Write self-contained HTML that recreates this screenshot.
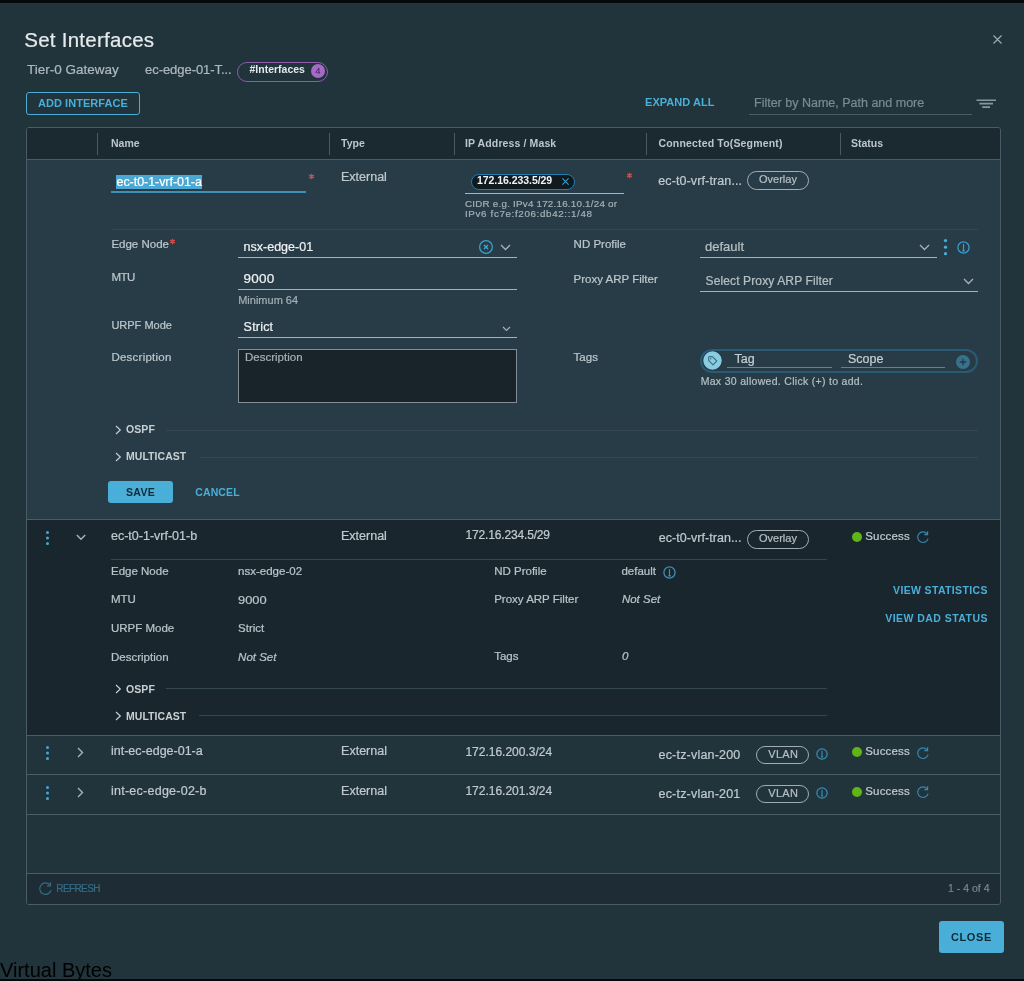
<!DOCTYPE html>
<html><head><meta charset="utf-8">
<style>
*{margin:0;padding:0;box-sizing:border-box}
html,body{width:1024px;height:981px;overflow:hidden;background:#05090c}
body{position:relative;font-family:"Liberation Sans",sans-serif}
.a{position:absolute;white-space:nowrap}
#modal{position:absolute;left:0;top:3px;width:1024px;height:976px;background:#21333b;border-top:1px solid #24363f;border-bottom:1px solid #24363f}
.dots{position:absolute;width:3px}
.dots i{display:block;width:3px;height:3px;border-radius:50%;background:#49afd9;margin-bottom:2.5px}
svg{overflow:visible}
</style></head><body>
<div id="modal"></div>
<div style="position:absolute;left:0;top:0;width:1024px;height:981px;will-change:transform">
<div class="a" style="left:24.3px;top:29.65px;font-size:20.5px;line-height:20.5px;color:#e6eaec;font-weight:normal;letter-spacing:0.25px;font-style:normal;-webkit-text-stroke:0.22px #e6eaec;">Set Interfaces</div>
<svg class="a" style="left:992.5px;top:35px" width="9" height="9" viewBox="0 0 9 9"><path d="M0.5 0.5L8.5 8.5M8.5 0.5L0.5 8.5" stroke="#a3aeb4" stroke-width="1.1"/></svg>
<div class="a" style="left:27px;top:62.57px;font-size:13.5px;line-height:13.5px;color:#aeb9bf;font-weight:normal;letter-spacing:0px;font-style:normal;-webkit-text-stroke:0.22px #aeb9bf;">Tier-0 Gateway</div>
<div class="a" style="left:145px;top:63.00px;font-size:13px;line-height:13px;color:#aeb9bf;font-weight:normal;letter-spacing:-0.05px;font-style:normal;-webkit-text-stroke:0.22px #aeb9bf;">ec-edge-01-T...</div>
<div class="a" style="left:237px;top:62px;width:91px;height:19.5px;border:1.8px solid #8d5cad;border-radius:10px"></div>
<div class="a" style="left:249.5px;top:64.11px;font-size:10.5px;line-height:10.5px;color:#e3e8eb;font-weight:bold;letter-spacing:0px;font-style:normal;">#Interfaces</div>
<div class="a" style="left:311px;top:64.3px;width:14px;height:14px;border-radius:50%;background:#a56ac6;color:#3b2350;font-size:9.5px;text-align:center;line-height:14px">4</div>
<div class="a" style="left:26px;top:92px;width:114px;height:23px;border:1px solid #49afd9;border-radius:3px"></div>
<div class="a" style="left:38px;top:97.69px;font-size:11px;line-height:11px;color:#49afd9;font-weight:bold;letter-spacing:0.05px;font-style:normal;">ADD INTERFACE</div>
<div class="a" style="left:645px;top:97.09px;font-size:11px;line-height:11px;color:#49afd9;font-weight:bold;letter-spacing:0.05px;font-style:normal;">EXPAND ALL</div>
<div class="a" style="left:754px;top:96.92px;font-size:12.5px;line-height:12.5px;color:#7b8a92;font-weight:normal;letter-spacing:0px;font-style:normal;-webkit-text-stroke:0.22px #7b8a92;">Filter by Name, Path and more</div>
<div class="a" style="left:749px;top:114px;width:223px;height:1px;background:#4b5c66"></div>
<svg class="a" style="left:976px;top:99px" width="21" height="10" viewBox="0 0 21 10"><path d="M0.5 1.2H20M3.4 4.6H17M6.2 8.1H14" stroke="#8a979e" stroke-width="1.6"/></svg>
<div class="a" style="left:26px;top:127px;width:975px;height:778px;border:1px solid #4b5c66;border-radius:3px;background:#21333b;overflow:hidden"></div>
<div class="a" style="left:27px;top:128px;width:973px;height:31px;background:#1b2931;border-radius:2px 2px 0 0"></div>
<div class="a" style="left:27px;top:159px;width:973px;height:1px;background:#4b5c66"></div>
<div class="a" style="left:27px;top:160px;width:973px;height:359px;background:#273c46"></div>
<div class="a" style="left:27px;top:519px;width:973px;height:1px;background:#4b5c66"></div>
<div class="a" style="left:27px;top:520px;width:973px;height:215px;background:#1a262d"></div>
<div class="a" style="left:27px;top:735px;width:973px;height:1px;background:#4b5c66"></div>
<div class="a" style="left:27px;top:774px;width:973px;height:1px;background:#4b5c66"></div>
<div class="a" style="left:27px;top:814px;width:973px;height:1px;background:#4b5c66"></div>
<div class="a" style="left:27px;top:873px;width:973px;height:1px;background:#4b5c66"></div>
<div class="a" style="left:27px;top:874px;width:973px;height:30px;background:#1e2d35;border-radius:0 0 2px 2px"></div>
<div class="a" style="left:97px;top:133px;width:1px;height:22px;background:#485a64"></div>
<div class="a" style="left:329px;top:133px;width:1px;height:22px;background:#485a64"></div>
<div class="a" style="left:454px;top:133px;width:1px;height:22px;background:#485a64"></div>
<div class="a" style="left:646px;top:133px;width:1px;height:22px;background:#485a64"></div>
<div class="a" style="left:840px;top:133px;width:1px;height:22px;background:#485a64"></div>
<div class="a" style="left:111px;top:138.41px;font-size:10.5px;line-height:10.5px;color:#bcc6cb;font-weight:bold;letter-spacing:0px;font-style:normal;">Name</div>
<div class="a" style="left:341px;top:138.41px;font-size:10.5px;line-height:10.5px;color:#bcc6cb;font-weight:bold;letter-spacing:0px;font-style:normal;">Type</div>
<div class="a" style="left:465px;top:138.41px;font-size:10.5px;line-height:10.5px;color:#bcc6cb;font-weight:bold;letter-spacing:0.12px;font-style:normal;">IP Address / Mask</div>
<div class="a" style="left:658.5px;top:138.41px;font-size:10.5px;line-height:10.5px;color:#bcc6cb;font-weight:bold;letter-spacing:0.17px;font-style:normal;">Connected To(Segment)</div>
<div class="a" style="left:851px;top:138.41px;font-size:10.5px;line-height:10.5px;color:#bcc6cb;font-weight:bold;letter-spacing:0px;font-style:normal;">Status</div>
<div class="a" style="left:116px;top:174.5px;width:86px;height:14px;background:#4aa8d5"></div>
<div class="a" style="left:116.5px;top:175.82px;font-size:12.5px;line-height:12.5px;color:#ffffff;font-weight:normal;letter-spacing:-0.05px;font-style:normal;-webkit-text-stroke:0.22px #ffffff;">ec-t0-1-vrf-01-a</div>
<div class="a" style="left:111px;top:191.3px;width:195px;height:1.7px;background:#3f8fb8"></div>
<svg class="a" style="left:308.2px;top:172.5px" width="7" height="7" viewBox="-3.5 -3.5 7 7"><path d="M0 -2.8V2.8M-2.42 -1.4L2.42 1.4M-2.42 1.4L2.42 -1.4" stroke="#cc4d4a" stroke-width="1.35"/></svg>
<div class="a" style="left:341px;top:170.52px;font-size:12.5px;line-height:12.5px;color:#c0cacf;font-weight:normal;letter-spacing:0px;font-style:normal;-webkit-text-stroke:0.22px #c0cacf;">External</div>
<div class="a" style="left:471px;top:173.8px;width:104px;height:16.2px;border:1.7px solid #1f7eae;border-radius:8.1px;background:#111a1f"></div>
<div class="a" style="left:477px;top:175.11px;font-size:10.5px;line-height:10.5px;color:#f2f4f5;font-weight:bold;letter-spacing:-0.05px;font-style:normal;">172.16.233.5/29</div>
<svg class="a" style="left:561.7px;top:178px" width="7" height="7" viewBox="0 0 7 7"><path d="M0.4 0.4L6.6 6.6M6.6 0.4L0.4 6.6" stroke="#3d9ccb" stroke-width="1.1"/></svg>
<div class="a" style="left:465px;top:193px;width:159px;height:1px;background:#a9b4ba"></div>
<svg class="a" style="left:625.8px;top:172.4px" width="7" height="7" viewBox="-3.5 -3.5 7 7"><path d="M0 -2.8V2.8M-2.42 -1.4L2.42 1.4M-2.42 1.4L2.42 -1.4" stroke="#cc4d4a" stroke-width="1.35"/></svg>
<div class="a" style="left:465px;top:198.90px;font-size:9.8px;line-height:9.8px;color:#a3afb5;font-weight:normal;letter-spacing:0.23px;font-style:normal;-webkit-text-stroke:0.22px #a3afb5;">CIDR e.g. IPv4 172.16.10.1/24 or</div>
<div class="a" style="left:465px;top:209.20px;font-size:9.8px;line-height:9.8px;color:#a3afb5;font-weight:normal;letter-spacing:0.64px;font-style:normal;-webkit-text-stroke:0.22px #a3afb5;">IPv6 fc7e:f206:db42::1/48</div>
<div class="a" style="left:658.2px;top:175.32px;font-size:12.5px;line-height:12.5px;color:#c0cacf;font-weight:normal;letter-spacing:0.12px;font-style:normal;-webkit-text-stroke:0.22px #c0cacf;">ec-t0-vrf-tran...</div>
<div class="a" style="left:747px;top:171px;width:62px;height:19px;border:1.5px solid #a2adb3;border-radius:10px"></div>
<div class="a" style="left:759px;top:173.69px;font-size:11px;line-height:11px;color:#b5bfc4;font-weight:normal;letter-spacing:0px;font-style:normal;-webkit-text-stroke:0.22px #b5bfc4;">Overlay</div>
<div class="a" style="left:111px;top:229px;width:867px;height:1px;background:#34474f"></div>
<div class="a" style="left:111.4px;top:238.77px;font-size:11.5px;line-height:11.5px;color:#bcc7cc;font-weight:normal;letter-spacing:0px;font-style:normal;-webkit-text-stroke:0.22px #bcc7cc;">Edge Node</div>
<svg class="a" style="left:169.4px;top:237.6px" width="7" height="7" viewBox="-3.5 -3.5 7 7"><path d="M0 -2.8V2.8M-2.42 -1.4L2.42 1.4M-2.42 1.4L2.42 -1.4" stroke="#cc4d4a" stroke-width="1.35"/></svg>
<div class="a" style="left:243.6px;top:241.22px;font-size:12.5px;line-height:12.5px;color:#eef1f3;font-weight:normal;letter-spacing:0px;font-style:normal;-webkit-text-stroke:0.22px #eef1f3;">nsx-edge-01</div>
<svg class="a" style="left:478.8px;top:240px" width="14" height="14" viewBox="0 0 14 14"><circle cx="7" cy="7" r="6.4" fill="none" stroke="#3fa2d0" stroke-width="1.2"/><path d="M5 5L9 9M9 5L5 9" stroke="#3fa2d0" stroke-width="1.5"/></svg>
<svg class="a" style="left:500px;top:244px" width="11" height="7" viewBox="0 0 11 7"><path d="M1 1L5.5 5.5L10 1" fill="none" stroke="#a5b3b9" stroke-width="1.3"/></svg>
<div class="a" style="left:238px;top:257px;width:279px;height:1px;background:#a5b3b9"></div>
<div class="a" style="left:111.4px;top:272.27px;font-size:11.5px;line-height:11.5px;color:#bcc7cc;font-weight:normal;letter-spacing:-0.5px;font-style:normal;-webkit-text-stroke:0.22px #bcc7cc;">MTU</div>
<div class="a" style="left:243.6px;top:271.57px;font-size:13.5px;line-height:13.5px;color:#eef1f3;font-weight:normal;letter-spacing:0.2px;font-style:normal;-webkit-text-stroke:0.22px #eef1f3;">9000</div>
<div class="a" style="left:238px;top:289px;width:279px;height:1px;background:#a5b3b9"></div>
<div class="a" style="left:238.2px;top:294.69px;font-size:11px;line-height:11px;color:#a3afb5;font-weight:normal;letter-spacing:0px;font-style:normal;-webkit-text-stroke:0.22px #a3afb5;">Minimum 64</div>
<div class="a" style="left:111.4px;top:319.89px;font-size:11px;line-height:11px;color:#bcc7cc;font-weight:normal;letter-spacing:0px;font-style:normal;-webkit-text-stroke:0.22px #bcc7cc;">URPF Mode</div>
<div class="a" style="left:243.6px;top:321.22px;font-size:12.5px;line-height:12.5px;color:#eef1f3;font-weight:normal;letter-spacing:0.2px;font-style:normal;-webkit-text-stroke:0.22px #eef1f3;">Strict</div>
<svg class="a" style="left:502px;top:326px" width="9" height="6" viewBox="0 0 9 6"><path d="M1 1L4.5 4.5L8 1" fill="none" stroke="#a5b3b9" stroke-width="1.2"/></svg>
<div class="a" style="left:238px;top:337px;width:279px;height:1px;background:#a5b3b9"></div>
<div class="a" style="left:111.4px;top:351.67px;font-size:11.5px;line-height:11.5px;color:#bcc7cc;font-weight:normal;letter-spacing:0.25px;font-style:normal;-webkit-text-stroke:0.22px #bcc7cc;">Description</div>
<div class="a" style="left:238px;top:349px;width:279px;height:54px;background:#18232a;border:1px solid #838e94"></div>
<div class="a" style="left:245px;top:351.67px;font-size:11.5px;line-height:11.5px;color:#a3afb5;font-weight:normal;letter-spacing:0px;font-style:normal;-webkit-text-stroke:0.22px #a3afb5;">Description</div>
<div class="a" style="left:573.6px;top:238.77px;font-size:11.5px;line-height:11.5px;color:#bcc7cc;font-weight:normal;letter-spacing:0px;font-style:normal;-webkit-text-stroke:0.22px #bcc7cc;">ND Profile</div>
<div class="a" style="left:705px;top:240.30px;font-size:13px;line-height:13px;color:#b5c0c5;font-weight:normal;letter-spacing:0px;font-style:normal;-webkit-text-stroke:0.22px #b5c0c5;">default</div>
<svg class="a" style="left:919px;top:244px" width="11" height="7" viewBox="0 0 11 7"><path d="M1 1L5.5 5.5L10 1" fill="none" stroke="#a5b3b9" stroke-width="1.3"/></svg>
<div class="a" style="left:700px;top:257px;width:237px;height:1px;background:#a5b3b9"></div>
<svg class="a" style="left:943px;top:238px" width="5" height="18" viewBox="0 0 5 18"><circle cx="2.5" cy="2.6" r="1.6" fill="#49afd9"/><circle cx="2.5" cy="9.2" r="1.6" fill="#49afd9"/><circle cx="2.5" cy="15.7" r="1.6" fill="#49afd9"/></svg>
<svg class="a" style="left:957px;top:241px" width="13" height="13" viewBox="0 0 13 13"><circle cx="6.5" cy="6.5" r="5.6" fill="none" stroke="#3d9ccb" stroke-width="1.3"/><path d="M6.5 3V9.8M5.2 9.8H7.8" stroke="#3d9ccb" stroke-width="1.2"/></svg>
<div class="a" style="left:573.6px;top:273.87px;font-size:11.5px;line-height:11.5px;color:#bcc7cc;font-weight:normal;letter-spacing:0px;font-style:normal;-webkit-text-stroke:0.22px #bcc7cc;">Proxy ARP Filter</div>
<div class="a" style="left:705.5px;top:275.24px;font-size:12px;line-height:12px;color:#b5c0c5;font-weight:normal;letter-spacing:0.13px;font-style:normal;-webkit-text-stroke:0.22px #b5c0c5;">Select Proxy ARP Filter</div>
<svg class="a" style="left:963px;top:278px" width="11" height="7" viewBox="0 0 11 7"><path d="M1 1L5.5 5.5L10 1" fill="none" stroke="#a5b3b9" stroke-width="1.3"/></svg>
<div class="a" style="left:700px;top:291px;width:278px;height:1px;background:#a5b3b9"></div>
<div class="a" style="left:573.6px;top:351.67px;font-size:11.5px;line-height:11.5px;color:#bcc7cc;font-weight:normal;letter-spacing:0px;font-style:normal;-webkit-text-stroke:0.22px #bcc7cc;">Tags</div>
<div class="a" style="left:700px;top:349.3px;width:278px;height:23.4px;border:2px solid #2a5b75;border-radius:12px"></div>
<svg class="a" style="left:703px;top:351px" width="19" height="19" viewBox="0 0 19 19"><circle cx="9.5" cy="9.5" r="9.2" fill="#89cde3"/><path d="M5.6 6.3V9.4L10 13.8L13.8 10L9.4 5.6H6.3Z" fill="none" stroke="#3e6f82" stroke-width="1.1" stroke-linejoin="round"/><circle cx="7.7" cy="7.7" r="0.8" fill="#3e6f82"/></svg>
<div class="a" style="left:734.6px;top:352.82px;font-size:12.5px;line-height:12.5px;color:#c5cfd4;font-weight:normal;letter-spacing:0px;font-style:normal;-webkit-text-stroke:0.22px #c5cfd4;">Tag</div>
<div class="a" style="left:727px;top:367px;width:105px;height:1px;background:#6f7e86"></div>
<div class="a" style="left:848px;top:352.82px;font-size:12.5px;line-height:12.5px;color:#c5cfd4;font-weight:normal;letter-spacing:0px;font-style:normal;-webkit-text-stroke:0.22px #c5cfd4;">Scope</div>
<div class="a" style="left:841px;top:367px;width:104px;height:1px;background:#6f7e86"></div>
<svg class="a" style="left:956px;top:354.5px" width="14" height="14" viewBox="0 0 14 14"><circle cx="7" cy="7" r="7" fill="#39718d"/><path d="M7 3.8V10.2M3.8 7H10.2" stroke="#1d3a47" stroke-width="1.3"/></svg>
<div class="a" style="left:700.7px;top:376.31px;font-size:10.5px;line-height:10.5px;color:#b3bfc4;font-weight:normal;letter-spacing:0.3px;font-style:normal;-webkit-text-stroke:0.22px #b3bfc4;">Max 30 allowed. Click (+) to add.</div>
<svg class="a" style="left:115px;top:425px" width="7" height="10" viewBox="0 0 7 10"><path d="M1 1L5.3 5L1 9" fill="none" stroke="#c5ced3" stroke-width="1.2"/></svg>
<div class="a" style="left:126px;top:424.31px;font-size:10.5px;line-height:10.5px;color:#c8d0d4;font-weight:bold;letter-spacing:0.1px;font-style:normal;">OSPF</div>
<div class="a" style="left:166px;top:430px;width:812px;height:1px;background:#34474f"></div>
<svg class="a" style="left:115px;top:452px" width="7" height="10" viewBox="0 0 7 10"><path d="M1 1L5.3 5L1 9" fill="none" stroke="#c5ced3" stroke-width="1.2"/></svg>
<div class="a" style="left:126px;top:451.11px;font-size:10.5px;line-height:10.5px;color:#c8d0d4;font-weight:bold;letter-spacing:0.05px;font-style:normal;">MULTICAST</div>
<div class="a" style="left:199px;top:457px;width:779px;height:1px;background:#34474f"></div>
<div class="a" style="left:108px;top:481px;width:65px;height:22px;background:#49afd9;border-radius:3px"></div>
<div class="a" style="left:126px;top:486.61px;font-size:10.5px;line-height:10.5px;color:#102a36;font-weight:bold;letter-spacing:0.3px;font-style:normal;">SAVE</div>
<div class="a" style="left:195.3px;top:486.61px;font-size:10.5px;line-height:10.5px;color:#49afd9;font-weight:bold;letter-spacing:0.1px;font-style:normal;">CANCEL</div>
<svg class="a" style="left:45px;top:530px" width="5" height="16" viewBox="0 0 5 16"><circle cx="2.5" cy="2.6" r="1.5" fill="#45a9d4"/><circle cx="2.5" cy="8" r="1.5" fill="#45a9d4"/><circle cx="2.5" cy="13.5" r="1.5" fill="#45a9d4"/></svg>
<svg class="a" style="left:76px;top:534px" width="10" height="7" viewBox="0 0 10 7"><path d="M0.8 1L5 5.2L9.2 1" fill="none" stroke="#a9b4ba" stroke-width="1.4"/></svg>
<div class="a" style="left:111px;top:530.12px;font-size:12.5px;line-height:12.5px;color:#c0cacf;font-weight:normal;letter-spacing:0px;font-style:normal;-webkit-text-stroke:0.22px #c0cacf;">ec-t0-1-vrf-01-b</div>
<div class="a" style="left:341px;top:529.92px;font-size:12.5px;line-height:12.5px;color:#c0cacf;font-weight:normal;letter-spacing:0px;font-style:normal;-webkit-text-stroke:0.22px #c0cacf;">External</div>
<div class="a" style="left:465.4px;top:529.14px;font-size:12px;line-height:12px;color:#c0cacf;font-weight:normal;letter-spacing:-0.15px;font-style:normal;-webkit-text-stroke:0.22px #c0cacf;">172.16.234.5/29</div>
<div class="a" style="left:658.7px;top:532.02px;font-size:12.5px;line-height:12.5px;color:#c0cacf;font-weight:normal;letter-spacing:0.05px;font-style:normal;-webkit-text-stroke:0.22px #c0cacf;">ec-t0-vrf-tran...</div>
<div class="a" style="left:747px;top:530px;width:62px;height:19px;border:1.5px solid #a2adb3;border-radius:10px"></div>
<div class="a" style="left:759px;top:532.69px;font-size:11px;line-height:11px;color:#b5bfc4;font-weight:normal;letter-spacing:0px;font-style:normal;-webkit-text-stroke:0.22px #b5bfc4;">Overlay</div>
<div class="a" style="left:851.7px;top:531.5px;width:10px;height:10px;background:#60b515;border-radius:50%"></div>
<div class="a" style="left:865.3px;top:530.57px;font-size:11.5px;line-height:11.5px;color:#c0cacf;font-weight:normal;letter-spacing:0.15px;font-style:normal;-webkit-text-stroke:0.22px #c0cacf;">Success</div>
<svg class="a" style="left:916.5px;top:531.0px" width="12" height="12" viewBox="0 0 12 12"><path d="M11.1 7.6A5.3 5.3 0 1 1 10.1 2.8" fill="none" stroke="#3787b0" stroke-width="1.15"/><path d="M10.6 0.2V3.6H7.3" fill="none" stroke="#3787b0" stroke-width="1.15"/></svg>
<div class="a" style="left:111px;top:559px;width:716px;height:1px;background:#34474f"></div>
<div class="a" style="left:111px;top:565.67px;font-size:11.5px;line-height:11.5px;color:#b9c4c9;font-weight:normal;letter-spacing:0px;font-style:normal;-webkit-text-stroke:0.22px #b9c4c9;">Edge Node</div>
<div class="a" style="left:238.1px;top:565.67px;font-size:11.5px;line-height:11.5px;color:#b9c4c9;font-weight:normal;letter-spacing:0px;font-style:normal;-webkit-text-stroke:0.22px #b9c4c9;">nsx-edge-02</div>
<div class="a" style="left:111px;top:594.37px;font-size:11.5px;line-height:11.5px;color:#b9c4c9;font-weight:normal;letter-spacing:0px;font-style:normal;-webkit-text-stroke:0.22px #b9c4c9;">MTU</div>
<div class="a" style="left:238.1px;top:595.37px;font-size:11.5px;line-height:11.5px;color:#b9c4c9;font-weight:normal;letter-spacing:0px;font-style:normal;-webkit-text-stroke:0.22px #b9c4c9;transform:scaleX(1.12);transform-origin:0 0">9000</div>
<div class="a" style="left:111px;top:623.17px;font-size:11.5px;line-height:11.5px;color:#b9c4c9;font-weight:normal;letter-spacing:0px;font-style:normal;-webkit-text-stroke:0.22px #b9c4c9;">URPF Mode</div>
<div class="a" style="left:238.1px;top:623.17px;font-size:11.5px;line-height:11.5px;color:#b9c4c9;font-weight:normal;letter-spacing:0px;font-style:normal;-webkit-text-stroke:0.22px #b9c4c9;">Strict</div>
<div class="a" style="left:111px;top:651.77px;font-size:11.5px;line-height:11.5px;color:#b9c4c9;font-weight:normal;letter-spacing:0px;font-style:normal;-webkit-text-stroke:0.22px #b9c4c9;">Description</div>
<div class="a" style="left:238.1px;top:651.77px;font-size:11.5px;line-height:11.5px;color:#b9c4c9;font-weight:normal;letter-spacing:0px;font-style:italic;-webkit-text-stroke:0.22px #b9c4c9;">Not Set</div>
<div class="a" style="left:494.2px;top:566.27px;font-size:11.5px;line-height:11.5px;color:#b9c4c9;font-weight:normal;letter-spacing:0px;font-style:normal;-webkit-text-stroke:0.22px #b9c4c9;">ND Profile</div>
<div class="a" style="left:621.4px;top:566.27px;font-size:11.5px;line-height:11.5px;color:#b9c4c9;font-weight:normal;letter-spacing:0px;font-style:normal;-webkit-text-stroke:0.22px #b9c4c9;">default</div>
<svg class="a" style="left:663px;top:566.2px" width="13" height="13" viewBox="0 0 13 13"><circle cx="6.5" cy="6.5" r="5.6" fill="none" stroke="#3b8fb9" stroke-width="1.3"/><path d="M6.5 3V9.8M5.2 9.8H7.8" stroke="#3b8fb9" stroke-width="1.2"/></svg>
<div class="a" style="left:494.2px;top:594.27px;font-size:11.5px;line-height:11.5px;color:#b9c4c9;font-weight:normal;letter-spacing:0px;font-style:normal;-webkit-text-stroke:0.22px #b9c4c9;">Proxy ARP Filter</div>
<div class="a" style="left:621.9px;top:594.27px;font-size:11.5px;line-height:11.5px;color:#b9c4c9;font-weight:normal;letter-spacing:0px;font-style:italic;-webkit-text-stroke:0.22px #b9c4c9;">Not Set</div>
<div class="a" style="left:494.2px;top:651.27px;font-size:11.5px;line-height:11.5px;color:#b9c4c9;font-weight:normal;letter-spacing:0px;font-style:normal;-webkit-text-stroke:0.22px #b9c4c9;">Tags</div>
<div class="a" style="left:622px;top:651.27px;font-size:11.5px;line-height:11.5px;color:#b9c4c9;font-weight:normal;letter-spacing:0px;font-style:italic;-webkit-text-stroke:0.22px #b9c4c9;">0</div>
<div class="a" style="left:893.1px;top:585.11px;font-size:10.5px;line-height:10.5px;color:#49afd9;font-weight:bold;letter-spacing:0.35px;font-style:normal;">VIEW STATISTICS</div>
<div class="a" style="left:885.3px;top:613.01px;font-size:10.5px;line-height:10.5px;color:#49afd9;font-weight:bold;letter-spacing:0.45px;font-style:normal;">VIEW DAD STATUS</div>
<svg class="a" style="left:115px;top:684px" width="7" height="10" viewBox="0 0 7 10"><path d="M1 1L5.3 5L1 9" fill="none" stroke="#c5ced3" stroke-width="1.2"/></svg>
<div class="a" style="left:126px;top:683.91px;font-size:10.5px;line-height:10.5px;color:#c8d0d4;font-weight:bold;letter-spacing:0.1px;font-style:normal;">OSPF</div>
<div class="a" style="left:166px;top:688px;width:661px;height:1px;background:#34474f"></div>
<svg class="a" style="left:115px;top:711px" width="7" height="10" viewBox="0 0 7 10"><path d="M1 1L5.3 5L1 9" fill="none" stroke="#c5ced3" stroke-width="1.2"/></svg>
<div class="a" style="left:126px;top:710.51px;font-size:10.5px;line-height:10.5px;color:#c8d0d4;font-weight:bold;letter-spacing:0.05px;font-style:normal;">MULTICAST</div>
<div class="a" style="left:199px;top:715px;width:628px;height:1px;background:#34474f"></div>
<svg class="a" style="left:45px;top:745px" width="5" height="16" viewBox="0 0 5 16"><circle cx="2.5" cy="2.6" r="1.5" fill="#45a9d4"/><circle cx="2.5" cy="8" r="1.5" fill="#45a9d4"/><circle cx="2.5" cy="13.5" r="1.5" fill="#45a9d4"/></svg>
<svg class="a" style="left:77px;top:747px" width="7" height="11" viewBox="0 0 7 11"><path d="M1 1L5.5 5.5L1 10" fill="none" stroke="#aab4ba" stroke-width="1.4"/></svg>
<div class="a" style="left:111px;top:745.42px;font-size:12.5px;line-height:12.5px;color:#c0cacf;font-weight:normal;letter-spacing:0px;font-style:normal;-webkit-text-stroke:0.22px #c0cacf;">int-ec-edge-01-a</div>
<div class="a" style="left:341.1px;top:745.42px;font-size:12.5px;line-height:12.5px;color:#c0cacf;font-weight:normal;letter-spacing:0px;font-style:normal;-webkit-text-stroke:0.22px #c0cacf;">External</div>
<div class="a" style="left:465.4px;top:745.84px;font-size:12px;line-height:12px;color:#c0cacf;font-weight:normal;letter-spacing:0px;font-style:normal;-webkit-text-stroke:0.22px #c0cacf;">172.16.200.3/24</div>
<div class="a" style="left:658.5px;top:748.82px;font-size:12.5px;line-height:12.5px;color:#c0cacf;font-weight:normal;letter-spacing:0.2px;font-style:normal;-webkit-text-stroke:0.22px #c0cacf;">ec-tz-vlan-200</div>
<div class="a" style="left:756px;top:745.6px;width:53px;height:18px;border:1.5px solid #a2adb3;border-radius:10px"></div>
<div class="a" style="left:768.3px;top:748.79px;font-size:11px;line-height:11px;color:#b5bfc4;font-weight:normal;letter-spacing:0.3px;font-style:normal;-webkit-text-stroke:0.22px #b5bfc4;">VLAN</div>
<svg class="a" style="left:816.2px;top:747.6px" width="12" height="12" viewBox="0 0 13 13"><circle cx="6.5" cy="6.5" r="5.6" fill="none" stroke="#3b8fb9" stroke-width="1.3"/><path d="M6.5 3V9.8M5.2 9.8H7.8" stroke="#3b8fb9" stroke-width="1.2"/></svg>
<div class="a" style="left:851.7px;top:747.2px;width:10px;height:10px;background:#60b515;border-radius:50%"></div>
<div class="a" style="left:865.3px;top:746.27px;font-size:11.5px;line-height:11.5px;color:#c0cacf;font-weight:normal;letter-spacing:0.15px;font-style:normal;-webkit-text-stroke:0.22px #c0cacf;">Success</div>
<svg class="a" style="left:916.5px;top:746.7px" width="12" height="12" viewBox="0 0 12 12"><path d="M11.1 7.6A5.3 5.3 0 1 1 10.1 2.8" fill="none" stroke="#3787b0" stroke-width="1.15"/><path d="M10.6 0.2V3.6H7.3" fill="none" stroke="#3787b0" stroke-width="1.15"/></svg>
<svg class="a" style="left:45px;top:784.6px" width="5" height="16" viewBox="0 0 5 16"><circle cx="2.5" cy="2.6" r="1.5" fill="#45a9d4"/><circle cx="2.5" cy="8" r="1.5" fill="#45a9d4"/><circle cx="2.5" cy="13.5" r="1.5" fill="#45a9d4"/></svg>
<svg class="a" style="left:77px;top:786.6px" width="7" height="11" viewBox="0 0 7 11"><path d="M1 1L5.5 5.5L1 10" fill="none" stroke="#aab4ba" stroke-width="1.4"/></svg>
<div class="a" style="left:111px;top:785.02px;font-size:12.5px;line-height:12.5px;color:#c0cacf;font-weight:normal;letter-spacing:0.25px;font-style:normal;-webkit-text-stroke:0.22px #c0cacf;">int-ec-edge-02-b</div>
<div class="a" style="left:341.1px;top:785.02px;font-size:12.5px;line-height:12.5px;color:#c0cacf;font-weight:normal;letter-spacing:0px;font-style:normal;-webkit-text-stroke:0.22px #c0cacf;">External</div>
<div class="a" style="left:465.4px;top:785.44px;font-size:12px;line-height:12px;color:#c0cacf;font-weight:normal;letter-spacing:0px;font-style:normal;-webkit-text-stroke:0.22px #c0cacf;">172.16.201.3/24</div>
<div class="a" style="left:658.5px;top:788.42px;font-size:12.5px;line-height:12.5px;color:#c0cacf;font-weight:normal;letter-spacing:0.2px;font-style:normal;-webkit-text-stroke:0.22px #c0cacf;">ec-tz-vlan-201</div>
<div class="a" style="left:756px;top:785.2px;width:53px;height:18px;border:1.5px solid #a2adb3;border-radius:10px"></div>
<div class="a" style="left:768.3px;top:788.39px;font-size:11px;line-height:11px;color:#b5bfc4;font-weight:normal;letter-spacing:0.3px;font-style:normal;-webkit-text-stroke:0.22px #b5bfc4;">VLAN</div>
<svg class="a" style="left:816.2px;top:787.2px" width="12" height="12" viewBox="0 0 13 13"><circle cx="6.5" cy="6.5" r="5.6" fill="none" stroke="#3b8fb9" stroke-width="1.3"/><path d="M6.5 3V9.8M5.2 9.8H7.8" stroke="#3b8fb9" stroke-width="1.2"/></svg>
<div class="a" style="left:851.7px;top:786.8000000000001px;width:10px;height:10px;background:#60b515;border-radius:50%"></div>
<div class="a" style="left:865.3px;top:785.87px;font-size:11.5px;line-height:11.5px;color:#c0cacf;font-weight:normal;letter-spacing:0.15px;font-style:normal;-webkit-text-stroke:0.22px #c0cacf;">Success</div>
<svg class="a" style="left:916.5px;top:786.3000000000001px" width="12" height="12" viewBox="0 0 12 12"><path d="M11.1 7.6A5.3 5.3 0 1 1 10.1 2.8" fill="none" stroke="#3787b0" stroke-width="1.15"/><path d="M10.6 0.2V3.6H7.3" fill="none" stroke="#3787b0" stroke-width="1.15"/></svg>
<svg class="a" style="left:38.5px;top:881.5px" width="13" height="13" viewBox="0 0 12 12"><path d="M11.1 7.6A5.3 5.3 0 1 1 10.1 2.8" fill="none" stroke="#356b84" stroke-width="1.15"/><path d="M10.6 0.2V3.6H7.3" fill="none" stroke="#356b84" stroke-width="1.15"/></svg>
<div class="a" style="left:56.3px;top:883.53px;font-size:10px;line-height:10px;color:#356b84;font-weight:normal;letter-spacing:-0.6px;font-style:normal;-webkit-text-stroke:0.22px #356b84;">REFRESH</div>
<div class="a" style="left:948.1px;top:883.11px;font-size:10.5px;line-height:10.5px;color:#76858d;font-weight:normal;letter-spacing:0px;font-style:normal;-webkit-text-stroke:0.22px #76858d;">1 - 4 of 4</div>
<div class="a" style="left:939px;top:921px;width:65px;height:32px;background:#49afd9;border-radius:3px"></div>
<div class="a" style="left:951px;top:932.09px;font-size:11px;line-height:11px;color:#102a36;font-weight:bold;letter-spacing:0.6px;font-style:normal;">CLOSE</div>
<div class="a" style="left:0px;top:959.77px;font-size:20px;line-height:20px;color:#000000;font-weight:normal;letter-spacing:0px;font-style:normal;">Virtual Bytes</div>
<div class="a" style="left:0px;top:979px;width:1024px;height:2px;background:#05090c"></div>
</div></body></html>
